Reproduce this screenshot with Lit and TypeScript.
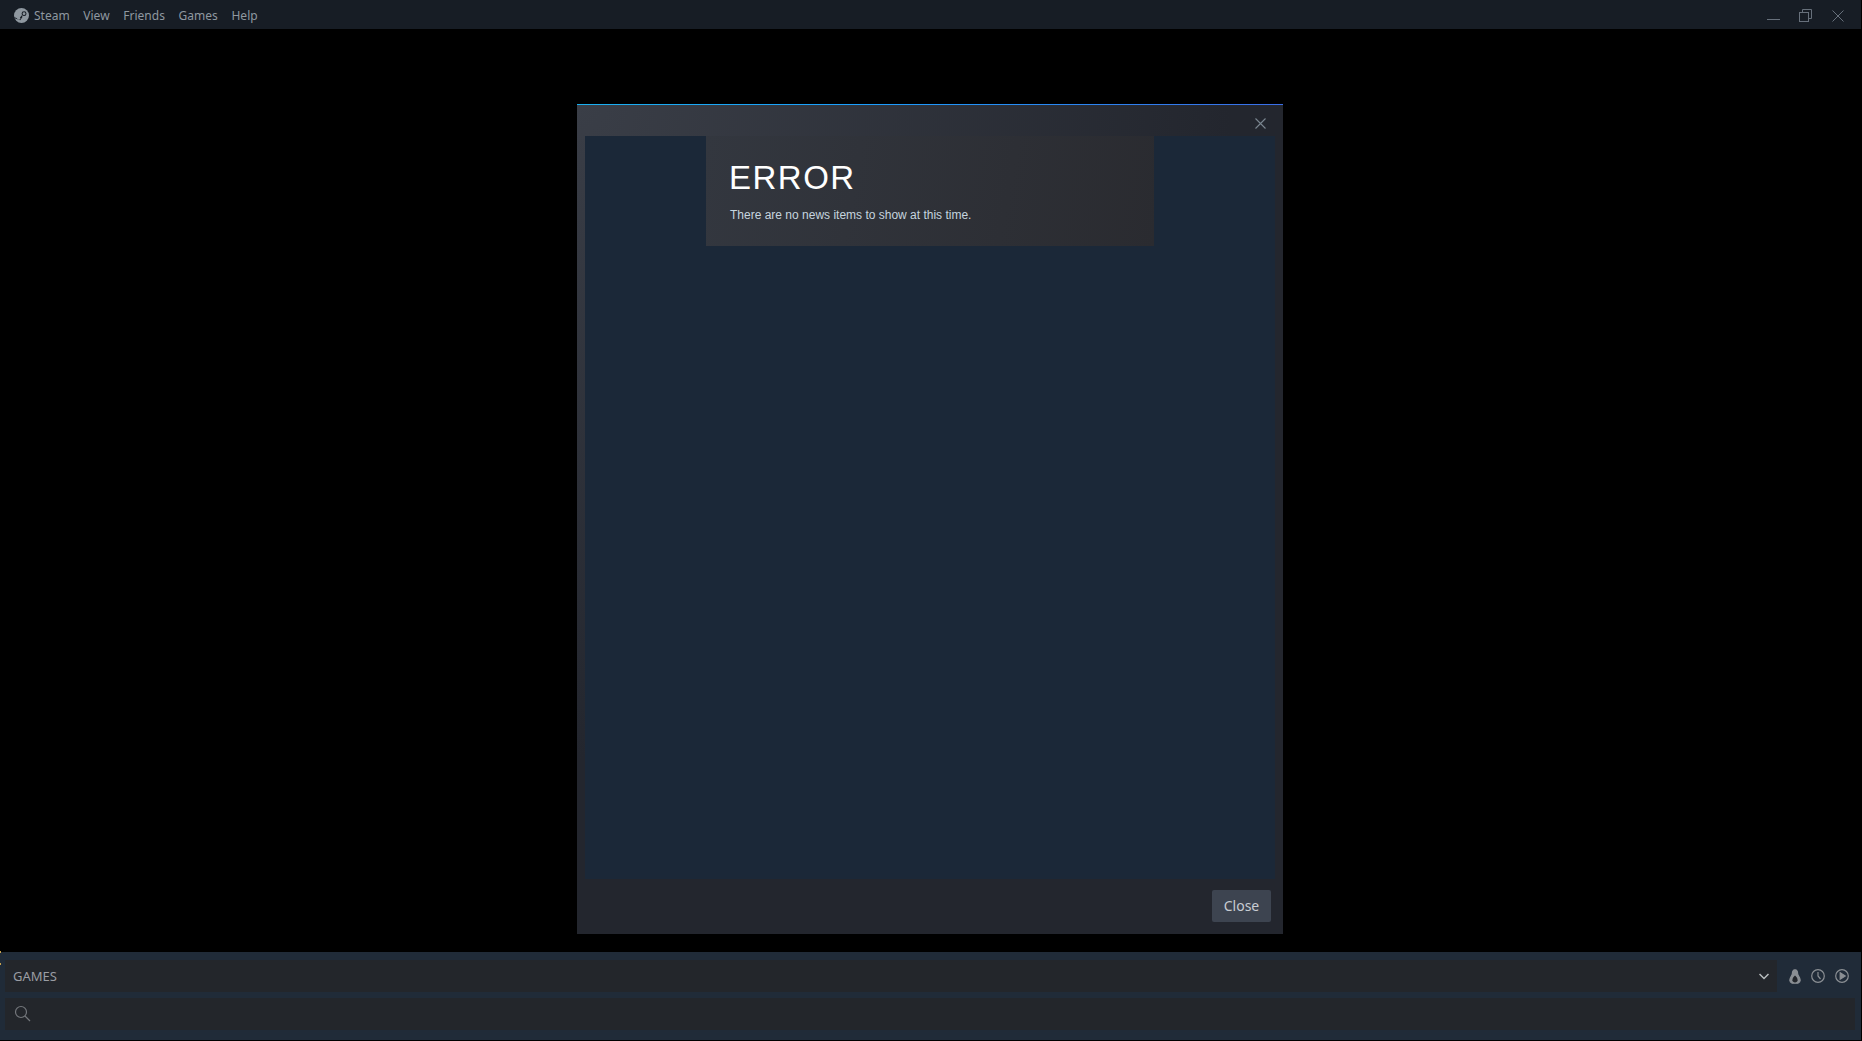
import { LitElement, html, css } from "lit";
import { customElement } from "lit/decorators.js";

@customElement("app-root")
export class AppRoot extends LitElement {
  static styles = css`
    :host { display: flex; flex-direction: column; width: 1862px; height: 1041px; background: #000; overflow: hidden; font-family: "Noto Sans", sans-serif; position: relative; }
    * { box-sizing: border-box; }
    .titlebar { height: 29px; width: 1861px; flex: none; background: #171d25; display: flex; align-items: center; color: #8f98a0; font-size: 12px; padding: 2px 0 0 14px; }
    .logo { width: 15px; height: 15px; margin-right: 5px; flex: none; }
    .menu { display: flex; gap: 13.7px; }
    .winctl { margin-left: auto; display: flex; align-items: center; }
    .winctl svg { display: block; fill: none; stroke: #67707b; }
    .win-min { margin-right: 19px; width: 13px; height: 13px; }
    .win-max { margin-right: 20px; width: 13px; height: 13px; }
    .win-close { margin-right: 17px; width: 12px; height: 12px; }
    .main { flex: 1; display: flex; justify-content: center; padding: 75px 2px 0 0; min-height: 0; }
    .dialog { width: 706px; height: 830px; background: radial-gradient(circle at top left, #3a3e47 0%, #23262e 60%); border-top: 1px solid; border-image: linear-gradient(90deg, #1ab0f0 0%, #1a9fff 40%, #3a6ee8 100%) 1; display: flex; flex-direction: column; padding: 0 8px; background-color: #23262e; }
    .head { height: 31px; flex: none; display: flex; justify-content: flex-end; align-items: flex-start; padding: 13px 9px 0 0; }
    .head svg { width: 11px; height: 11px; fill: none; stroke: #7a8690; stroke-width: 1.1; }
    .content { height: 743px; flex: none; background: #1b2838; display: flex; justify-content: center; }
    .error { width: 448px; height: 110px; background: linear-gradient(100deg, #33373f 0%, #2a2b30 100%); padding: 24px; color: #fff; font-family: "Liberation Sans", Arial, sans-serif; }
    .error h1 { margin: 0 0 0 -1px; font-size: 33px; font-weight: 400; line-height: 36px; letter-spacing: 1.5px; }
    .error p { margin: 11px 0 0; font-size: 12px; line-height: 16px; color: #c6d4df; }
    .foot { flex: 1; display: flex; justify-content: flex-end; align-items: flex-start; padding: 11px 4px 0 0; }
    .btn { width: 59px; height: 32px; padding-bottom: 1px; border-radius: 2px; background: #3d4450; color: #c8ccd2; font-size: 14px; display: flex; align-items: center; justify-content: center; }
    .bottom { height: 88px; width: 1861px; flex: none; background: #202b38; padding: 8px 0 0 5px; margin-bottom: 1px; }
    .bottom-top { display: flex; height: 32px; }
    .games { width: 1772px; height: 32px; background: #23262b; display: flex; align-items: center; padding: 0 8px; color: #9a9da3; font-size: 13px; }
    .chev { margin-left: auto; width: 10px; height: 7px; fill: none; stroke: #b8bcbf; stroke-width: 1.5; margin-right: 0; }
    .icons { display: flex; align-items: center; gap: 10px; padding-left: 12px; }
    .icons svg { width: 14px; height: 14px; fill: none; stroke: #8b8f94; stroke-width: 1.2; display: block; }
    .icons svg.tux { width: 12px; height: 15px; }
    .search { margin: 6px 6px 0 0; height: 32px; background: #23262b; display: flex; align-items: center; padding: 0 0 2px 9px; }
    .search svg { width: 17px; height: 17px; fill: none; stroke: #74777c; stroke-width: 1.2; }
    .speck { position: absolute; left: 0; width: 1px; background: #c9a24d; }
    .s1 { top: 951px; height: 2px; }
    .s2 { top: 963px; height: 2px; }
  `;

  render() {
    return html`
      <div class="titlebar">
        <svg class="logo" viewBox="0 0 16 16">
          <circle cx="8" cy="8" r="8" fill="#8f98a0"></circle>
          <circle cx="10.7" cy="6" r="2.6" fill="#171d25"></circle>
          <circle cx="10.7" cy="6" r="1.5" fill="#8f98a0"></circle>
          <path d="M0 9.6 L5 11.6 L8.4 7.6 L9 9.6 L6.6 13 L0.6 11Z" fill="#171d25"></path>
          <circle cx="5.1" cy="11" r="1.6" fill="#8f98a0"></circle>
        </svg>
        <div class="menu"><span>Steam</span><span>View</span><span>Friends</span><span>Games</span><span>Help</span></div>
        <div class="winctl">
          <svg class="win-min" viewBox="0 0 13 13"><path d="M0 10.5H13"></path></svg>
          <svg class="win-max" viewBox="0 0 13 13"><rect x="0.5" y="3.5" width="9" height="9"></rect><path d="M3.5 3.5V0.5H12.5V9.5H9.5"></path></svg>
          <svg class="win-close" viewBox="0 0 12 12"><path d="M0.5 0.5L11.5 11.5M11.5 0.5L0.5 11.5"></path></svg>
        </div>
      </div>
      <div class="main">
        <div class="dialog">
          <div class="head"><svg viewBox="0 0 11 11"><path d="M0.5 0.5L10.5 10.5M10.5 0.5L0.5 10.5"></path></svg></div>
          <div class="content">
            <div class="error">
              <h1>ERROR</h1>
              <p>There are no news items to show at this time.</p>
            </div>
          </div>
          <div class="foot"><div class="btn">Close</div></div>
        </div>
      </div>
      <div class="bottom">
        <div class="bottom-top">
          <div class="games">GAMES
            <svg class="chev" viewBox="0 0 10 7"><path d="M0.5 1L5 5.5L9.5 1"></path></svg>
          </div>
          <div class="icons">
            <svg class="tux" viewBox="0 0 12 15"><path d="M6 0.8C4 0.8 3.4 2.6 3.4 4.6C3.4 6.6 0.8 8.4 0.8 11.2C0.8 12.6 2 13.6 3.2 14.2H8.8C10 13.6 11.2 12.6 11.2 11.2C11.2 8.4 8.6 6.6 8.6 4.6C8.6 2.6 8 0.8 6 0.8Z" fill="#8b8f94"></path><path d="M6 6.6C4.6 7.6 3.4 9.4 3.4 11.2C3.4 12.6 4.6 13.4 6 13.4C7.4 13.4 8.6 12.6 8.6 11.2C8.6 9.4 7.4 7.6 6 6.6Z" fill="#23262b" stroke="none"></path></svg>
            <svg viewBox="0 0 14 14"><circle cx="7" cy="7" r="6.3"></circle><path d="M7 3V7L9.5 10"></path></svg>
            <svg viewBox="0 0 14 14"><circle cx="7" cy="7" r="6.3"></circle><path d="M5.2 3.8L10.2 7L5.2 10.2Z" fill="#8b8f94"></path></svg>
          </div>
        </div>
        <div class="search"><svg viewBox="0 0 17 17"><circle cx="7" cy="7" r="5.5"></circle><path d="M11 11L16 16"></path></svg></div>
      </div>
      <i class="speck s1"></i><i class="speck s2"></i>
    `;
  }
}
